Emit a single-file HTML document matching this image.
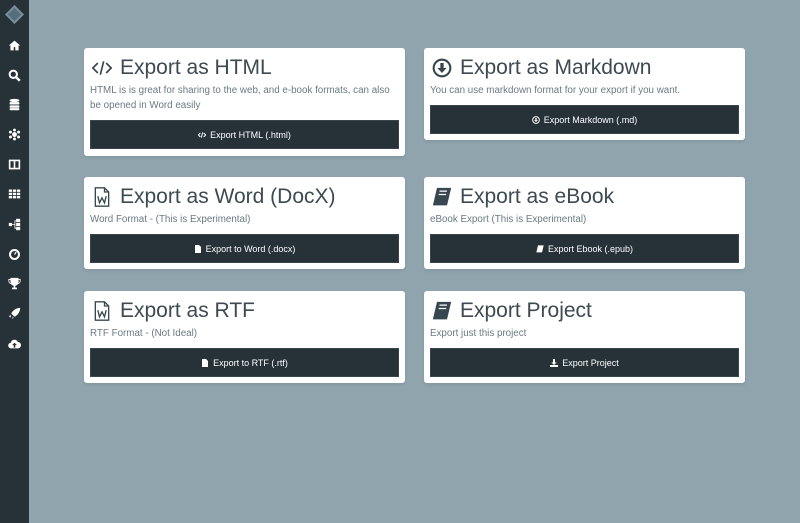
<!DOCTYPE html>
<html><head><meta charset="utf-8"><style>
*{box-sizing:border-box;margin:0;padding:0}
body{width:800px;height:523px;background:#90a4ae;font-family:"Liberation Sans",sans-serif;position:relative;overflow:hidden}
.side{position:absolute;left:0;top:0;width:29px;height:523px;background:#263238}
.side svg{position:absolute;left:8px;width:13px;height:13px;fill:#fff}
.card{position:absolute;background:#fff;border-radius:3px;width:321px;box-shadow:0 2px 3px rgba(0,0,0,.08)}
.card h2{position:absolute;left:8px;top:8px;font-weight:normal;font-size:21px;color:#3d4a51;white-space:nowrap;display:flex;align-items:center}
.card h2 svg{width:20px;height:20px;margin-right:8px;fill:#37474f}
.card p{position:absolute;left:6px;font-size:9.8px;line-height:15px;color:#6b7a82;width:312px}
.btn{position:absolute;left:6px;width:309px;height:29px;background:#263238;color:#fff;font-size:9px;display:flex;align-items:center;justify-content:center;border:1px solid #3a454b}
.btn svg{width:8px;height:8px;fill:#fff;margin-right:4px}
</style></head><body>
<div class="side">
<svg style="left:5px;top:5px;width:19px;height:19px" viewBox="0 0 20 20"><path d="M10 0L20 10 10 20 0 10z" fill="#78909c"/><path d="M10 3L17 10 10 17 3 10z" fill="#546e7a"/></svg>
<svg style="top:39px" viewBox="0 0 16 16"><path d="M8 2L1 8h2v6h4v-4h2v4h4V8h2z"/></svg>
<svg style="top:69px" viewBox="0 0 16 16"><circle cx="6.5" cy="6.5" r="4.5" fill="none" stroke="#fff" stroke-width="2.5"/><path d="M9.5 9.5l5 5" stroke="#fff" stroke-width="3"/></svg>
<svg style="top:98px" viewBox="0 0 16 16"><ellipse cx="8" cy="3" rx="6" ry="2"/><rect x="2" y="5" width="12" height="3" rx="1"/><rect x="2" y="9" width="12" height="3" rx="1"/><rect x="2" y="12.5" width="12" height="2.5" rx="1"/></svg>
<svg style="top:128px" viewBox="0 0 16 16"><circle cx="8" cy="8" r="3"/><circle cx="8" cy="2.5" r="1.8"/><circle cx="8" cy="13.5" r="1.8"/><circle cx="3" cy="5" r="1.8"/><circle cx="13" cy="5" r="1.8"/><circle cx="3" cy="11" r="1.8"/><circle cx="13" cy="11" r="1.8"/></svg>
<svg style="top:158px" viewBox="0 0 16 16"><path d="M1 2h14v12H1zM3 4v8h4V4zm6 0v8h4V4z"/></svg>
<svg style="top:187px" viewBox="0 0 16 16"><path d="M1 3h4v3H1zm5 0h4v3H6zm5 0h4v3h-4zM1 7h4v3H1zm5 0h4v3H6zm5 0h4v3h-4zM1 11h4v3H1zm5 0h4v3H6zm5 0h4v3h-4z"/></svg>
<svg style="top:218px" viewBox="0 0 16 16"><rect x="1" y="6" width="4" height="4"/><rect x="10" y="1" width="5" height="4"/><rect x="10" y="6" width="5" height="4"/><rect x="10" y="11" width="5" height="4"/><path d="M5 7.5h3V3h2v1H9v8h1v1H8V8.5H5z"/></svg>
<svg style="top:248px" viewBox="0 0 16 16"><circle cx="8" cy="8" r="5.5" fill="none" stroke="#fff" stroke-width="2.5"/><path d="M8 8l2-3" stroke="#fff" stroke-width="1.5"/></svg>
<svg style="top:277px" viewBox="0 0 16 16"><path d="M3 1h10v5a5 5 0 0 1-10 0zM7 11h2v2h2v2H5v-2h2z"/><path d="M3 3H1v2a3 3 0 0 0 3 3M13 3h2v2a3 3 0 0 1-3 3" fill="none" stroke="#fff"/></svg>
<svg style="top:307px" viewBox="0 0 16 16"><path d="M15 1C10 1 6 4 4 8l4 4c4-2 7-6 7-11zM4 10l-3 1 2 2zM6 12l-1 3 2-2z"/></svg>
<svg style="top:337px" viewBox="0 0 16 16"><path d="M4 14a3.5 3.5 0 0 1-.5-7A4.5 4.5 0 0 1 12 6a4 4 0 0 1 0 8z"/><path d="M8 7l-3 3h2v3h2v-3h2z" fill="#263238"/></svg>
</div>

<div class="card" style="left:84px;top:48px;height:108px">
<h2><svg viewBox="0 0 24 24"><path d="M7 6L1 12l6 6M17 6l6 6-6 6M14 4l-4 16" fill="none" stroke="#37474f" stroke-width="2"/></svg>Export as HTML</h2>
<p style="top:35px">HTML is is great for sharing to the web, and e-book formats, can also be opened in Word easily</p>
<div class="btn" style="top:72px"><svg viewBox="0 0 24 24"><path d="M7 6L1 12l6 6M17 6l6 6-6 6M14 4l-4 16" fill="none" stroke="#fff" stroke-width="3"/></svg>Export HTML (.html)</div>
</div>

<div class="card" style="left:424px;top:48px;height:92px">
<h2><svg viewBox="0 0 24 24"><circle cx="12" cy="12" r="10" fill="none" stroke="#37474f" stroke-width="2.5"/><path d="M10 6h4v6h3.5L12 18l-5.5-6H10z"/></svg>Export as Markdown</h2>
<p style="top:35px">You can use markdown format for your export if you want.</p>
<div class="btn" style="top:57px"><svg viewBox="0 0 24 24"><circle cx="12" cy="12" r="10" fill="none" stroke="#fff" stroke-width="3"/><path d="M10 6h4v6h3.5L12 18l-5.5-6H10z"/></svg>Export Markdown (.md)</div>
</div>

<div class="card" style="left:84px;top:177px;height:92px">
<h2><svg viewBox="0 0 24 24"><path d="M4 1h11l5 5v17H4z" fill="none" stroke="#37474f" stroke-width="1.6"/><path d="M15 1v5h5" fill="none" stroke="#37474f" stroke-width="1.6"/><path d="M7 11l2 8 3-6 3 6 2-8" fill="none" stroke="#37474f" stroke-width="1.6"/></svg>Export as Word (DocX)</h2>
<p style="top:35px">Word Format - (This is Experimental)</p>
<div class="btn" style="top:57px"><svg viewBox="0 0 24 24"><path d="M3 0h12l6 6v18H3z"/></svg>Export to Word (.docx)</div>
</div>

<div class="card" style="left:424px;top:177px;height:92px">
<h2><svg viewBox="0 0 24 24"><path d="M6 1h17l-4 17H2zM2 18h17l-1 4H1z"/><path d="M9 5h9M8 9h9" stroke="#fff" stroke-width="1.5"/></svg>Export as eBook</h2>
<p style="top:35px">eBook Export (This is Experimental)</p>
<div class="btn" style="top:57px"><svg viewBox="0 0 24 24"><path d="M6 1h17l-4 17H2zM2 18h17l-1 4H1z"/></svg>Export Ebook (.epub)</div>
</div>

<div class="card" style="left:84px;top:291px;height:92px">
<h2><svg viewBox="0 0 24 24"><path d="M4 1h11l5 5v17H4z" fill="none" stroke="#37474f" stroke-width="1.6"/><path d="M15 1v5h5" fill="none" stroke="#37474f" stroke-width="1.6"/><path d="M7 11l2 8 3-6 3 6 2-8" fill="none" stroke="#37474f" stroke-width="1.6"/></svg>Export as RTF</h2>
<p style="top:35px">RTF Format - (Not Ideal)</p>
<div class="btn" style="top:57px"><svg viewBox="0 0 24 24"><path d="M3 0h12l6 6v18H3z"/></svg>Export to RTF (.rtf)</div>
</div>

<div class="card" style="left:424px;top:291px;height:92px">
<h2><svg viewBox="0 0 24 24"><path d="M6 1h17l-4 17H2zM2 18h17l-1 4H1z"/><path d="M9 5h9M8 9h9" stroke="#fff" stroke-width="1.5"/></svg>Export Project</h2>
<p style="top:35px">Export just this project</p>
<div class="btn" style="top:57px"><svg viewBox="0 0 24 24"><path d="M9 0h6v10h5l-8 8-8-8h5zM0 18h24v6H0z"/></svg>Export Project</div>
</div>
</body></html>
